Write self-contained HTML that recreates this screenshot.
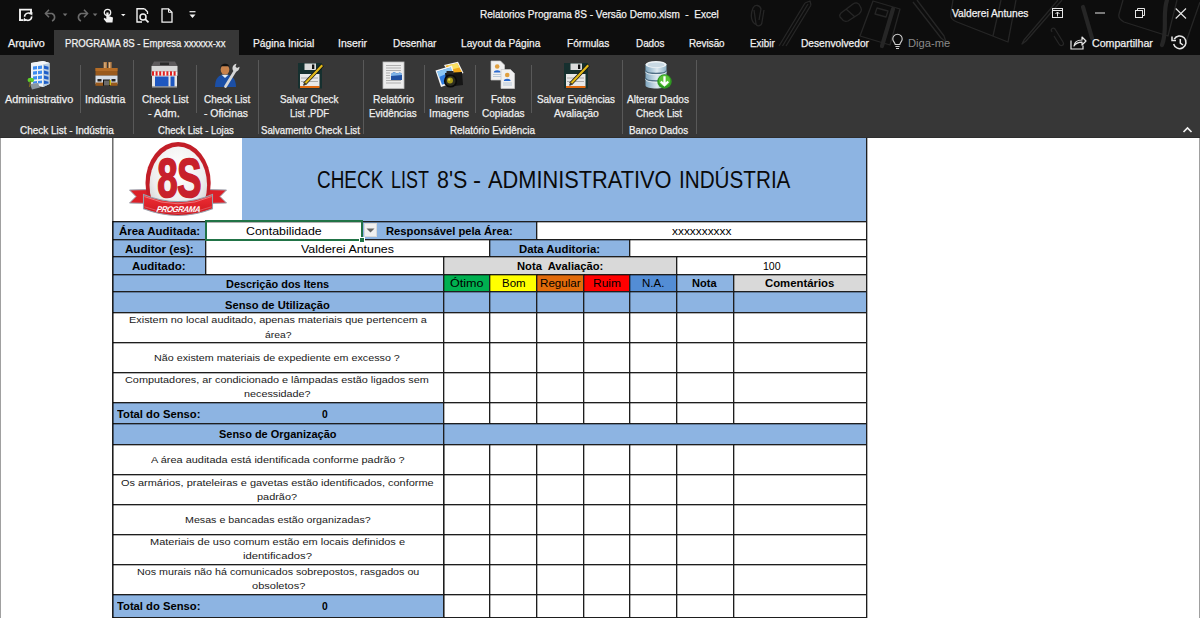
<!DOCTYPE html>
<html><head><meta charset="utf-8"><title>Excel</title>
<style>
html,body{margin:0;padding:0;width:1200px;height:618px;overflow:hidden;background:#fff;position:relative;font-family:"Liberation Sans",sans-serif}
.a{position:absolute}
.tx{position:absolute;white-space:pre;transform-origin:0 0;font-family:"Liberation Sans",sans-serif}
.hl{position:absolute;height:1px;background:#1e1e1e;box-shadow:0 1px 0 rgba(0,0,0,0.3)}
.vl{position:absolute;width:1px;background:#1e1e1e;box-shadow:1px 0 0 rgba(0,0,0,0.3)}
.sep{position:absolute;width:1px;background:#595959}
svg{position:absolute;overflow:visible}

</style></head><body>
<div class="a" style="left:0;top:0;width:1200px;height:55px;background:#0d0d0d"></div>
<div class="a" style="left:54px;top:30px;width:185px;height:25px;background:#373737"></div>
<div class="a" style="left:0;top:55px;width:1200px;height:83px;background:#373737"></div>
<div class="a" style="left:0;top:137px;width:1200px;height:1px;background:#2e2e2e"></div>
<div class="a" style="left:242px;top:138px;width:624px;height:83px;background:#8db4e2"></div>
<div class="a" style="left:112px;top:221px;width:93px;height:53px;background:#8db4e2"></div>
<div class="a" style="left:362px;top:221px;width:174px;height:18px;background:#8db4e2"></div>
<div class="a" style="left:489px;top:239px;width:140px;height:17px;background:#8db4e2"></div>
<div class="a" style="left:443px;top:256px;width:233px;height:18px;background:#d9d9d9"></div>
<div class="a" style="left:112px;top:274px;width:331px;height:17px;background:#8db4e2"></div>
<div class="a" style="left:443px;top:274px;width:46px;height:17px;background:#00b050"></div>
<div class="a" style="left:489px;top:274px;width:47px;height:17px;background:#ffff00"></div>
<div class="a" style="left:536px;top:274px;width:47px;height:17px;background:#e26b0a"></div>
<div class="a" style="left:583px;top:274px;width:46px;height:17px;background:#ff0000"></div>
<div class="a" style="left:629px;top:274px;width:47px;height:17px;background:#538dd5"></div>
<div class="a" style="left:676px;top:274px;width:57px;height:17px;background:#8db4e2"></div>
<div class="a" style="left:733px;top:274px;width:133px;height:17px;background:#d9d9d9"></div>
<div class="a" style="left:112px;top:291px;width:754px;height:21px;background:#8db4e2"></div>
<div class="a" style="left:112px;top:402px;width:331px;height:21px;background:#8db4e2"></div>
<div class="a" style="left:112px;top:423px;width:754px;height:21px;background:#8db4e2"></div>
<div class="a" style="left:112px;top:594px;width:331px;height:23px;background:#8db4e2"></div>
<div class="hl" style="left:112px;top:221px;width:755px"></div>
<div class="hl" style="left:112px;top:239px;width:755px"></div>
<div class="hl" style="left:112px;top:256px;width:755px"></div>
<div class="hl" style="left:112px;top:274px;width:755px"></div>
<div class="hl" style="left:112px;top:291px;width:755px"></div>
<div class="hl" style="left:112px;top:312px;width:755px"></div>
<div class="hl" style="left:112px;top:342px;width:755px"></div>
<div class="hl" style="left:112px;top:372px;width:755px"></div>
<div class="hl" style="left:112px;top:402px;width:755px"></div>
<div class="hl" style="left:112px;top:423px;width:755px"></div>
<div class="hl" style="left:112px;top:444px;width:755px"></div>
<div class="hl" style="left:112px;top:474px;width:755px"></div>
<div class="hl" style="left:112px;top:504px;width:755px"></div>
<div class="hl" style="left:112px;top:534px;width:755px"></div>
<div class="hl" style="left:112px;top:564px;width:755px"></div>
<div class="hl" style="left:112px;top:594px;width:755px"></div>
<div class="hl" style="left:112px;top:617px;width:755px"></div>
<div class="vl" style="left:112px;top:138px;height:480px;background:#6e6e6e"></div>
<div class="vl" style="left:112px;top:221px;height:397px"></div>
<div class="vl" style="left:866px;top:138px;height:480px"></div>
<div class="vl" style="left:205px;top:221px;height:54px"></div>
<div class="vl" style="left:536px;top:221px;height:19px"></div>
<div class="vl" style="left:489px;top:239px;height:18px"></div>
<div class="vl" style="left:629px;top:239px;height:18px"></div>
<div class="vl" style="left:443px;top:256px;height:362px"></div>
<div class="vl" style="left:676px;top:256px;height:19px"></div>
<div class="vl" style="left:489px;top:274px;height:150px"></div>
<div class="vl" style="left:536px;top:274px;height:150px"></div>
<div class="vl" style="left:583px;top:274px;height:150px"></div>
<div class="vl" style="left:629px;top:274px;height:150px"></div>
<div class="vl" style="left:676px;top:274px;height:150px"></div>
<div class="vl" style="left:733px;top:274px;height:150px"></div>
<div class="vl" style="left:443px;top:444px;height:174px"></div>
<div class="vl" style="left:489px;top:444px;height:174px"></div>
<div class="vl" style="left:536px;top:444px;height:174px"></div>
<div class="vl" style="left:583px;top:444px;height:174px"></div>
<div class="vl" style="left:629px;top:444px;height:174px"></div>
<div class="vl" style="left:676px;top:444px;height:174px"></div>
<div class="vl" style="left:733px;top:444px;height:174px"></div>
<div class="a" style="left:205px;top:220px;width:154px;height:17px;border:2px solid #217346"></div>
<div class="a" style="left:359px;top:237px;width:6px;height:6px;background:#217346;border:1px solid #fff;box-sizing:border-box"></div>
<div class="a" style="left:364px;top:223px;width:13px;height:14px;background:#f0f0f0;border:1px solid #dadada;box-sizing:border-box"></div>
<svg style="left:366px;top:228px" width="9" height="5"><path d="M0.5 0.5 L8.5 0.5 L4.5 4.5 Z" fill="#666"/></svg>
<div class="a" style="left:0;top:138px;width:1px;height:480px;background:#a0a0a0"></div>
<div class="a" style="left:1199px;top:138px;width:1px;height:480px;background:#a0a0a0"></div>
<svg style="left:740px;top:0px" width="460" height="55" viewBox="740 0 460 55">
 <g fill="none" stroke="#262626" stroke-width="1.3" stroke-linejoin="round">
  <path d="M757 25 C751 23 750 15 753 8 C755 4 760 5 761 9 L759 20 M754 10 L756 24 C757 27 762 26 762 22 L764 10"/>
  <path d="M805 3 L779 46 M811 5 L786 46 M808 4 L782.5 46 M805 3 L810 1 L811 5"/>
  <path d="M841 13 L853 4 C856 2 859 3 860 6 L861 8 C862 10 861 12 859 14 L848 21 C845 22 843 21 842 19 L840 17 C839 15 840 14 841 13 Z M846 9 L855 17"/>
  <path d="M873 1 L900 9 L890 45 L860 36 Z"/>
  <path d="M877 8 L888 11 L886 17 L875 14 Z"/>
  <path d="M917 0 L944 36 L946 42 L941 38 L913 2"/>
  <path d="M953 0 L951 12 C950 18 952 20 957 22 L1008 42 L1016 0"/>
  <path d="M1001 0 L993 36"/>
  <path d="M1058 0 L1024 40 L1022 44 L1026 41 L1062 0"/>
  <path d="M1052 32 C1050 29 1053 27 1055 29 L1063 42 C1065 45 1061 47 1059 44 L1054 36"/>
  <path d="M1123 0 L1119 14 C1118 18 1120 20 1124 22 L1168 36 L1177 0"/>
  <path d="M1200 2 L1185 45"/>
 </g>
 <g fill="none" stroke="#262626" stroke-width="4.2" stroke-linecap="round">
  <path d="M1083 7 L1092 38"/>
  <path d="M893 9 L882 46"/>
  <path d="M1167 0 C1162 15 1168 30 1162 45"/>
 </g>
</svg>
<!-- QAT icons -->
<svg style="left:14px;top:4px" width="24" height="22" viewBox="14 4 24 22">
 <path d="M20 21 V9.6 H31 V13" fill="none" stroke="#f4f4f4" stroke-width="1.9"/>
 <path d="M19.2 20.1 H23.5" stroke="#f4f4f4" stroke-width="1.8"/>
 <path d="M24.6 16.8 A3.6 3.6 0 0 1 30.8 14.2" fill="none" stroke="#f4f4f4" stroke-width="1.6"/>
 <path d="M31.6 16.4 A3.6 3.6 0 0 1 25.4 19.2" fill="none" stroke="#f4f4f4" stroke-width="1.6"/>
 <path d="M29.4 12.6 L32.6 12.2 L32.2 15.8 Z" fill="#f4f4f4"/>
 <path d="M26.8 20.8 L23.6 21.2 L24 17.6 Z" fill="#f4f4f4"/>
</svg>
<svg style="left:44px;top:8px" width="24" height="14" viewBox="0 0 24 14">
 <path d="M1.5 5.5 H8 A4 4 0 0 1 8 13" fill="none" stroke="#6b6b6b" stroke-width="1.6"/>
 <path d="M5 1.8 L1.5 5.5 L5 9.2" fill="none" stroke="#6b6b6b" stroke-width="1.6"/>
 <path d="M18.8 5.6 H23.4 L21.1 8.3 Z" fill="#707070"/>
</svg>
<svg style="left:75px;top:8px" width="24" height="14" viewBox="0 0 24 14">
 <path d="M12.5 5.5 H6 A4 4 0 0 0 6 13" fill="none" stroke="#6b6b6b" stroke-width="1.6"/>
 <path d="M9 1.8 L12.5 5.5 L9 9.2" fill="none" stroke="#6b6b6b" stroke-width="1.6"/>
 <path d="M17.8 5.6 H22.4 L20.1 8.3 Z" fill="#707070"/>
</svg>
<svg style="left:102px;top:8px" width="25" height="15" viewBox="0 0 25 15">
 <circle cx="5.5" cy="4.5" r="3.2" fill="none" stroke="#f2f2f2" stroke-width="1.3"/>
 <path d="M4.3 4.5 V11 L2.5 9.8 L1.6 11 L4.5 14.5 H10.5 L11 9.5 L6.6 8 V4.5 Z" fill="#f2f2f2"/>
 <path d="M19 6 H23.5 L21.25 8.3 Z" fill="#f2f2f2"/>
</svg>
<svg style="left:136px;top:8px" width="14" height="15" viewBox="0 0 14 15">
 <path d="M8.5 0.8 H1 V14 H6" fill="none" stroke="#f2f2f2" stroke-width="1.4"/>
 <path d="M8.5 0.8 L11.5 3.8 V6" fill="none" stroke="#f2f2f2" stroke-width="1.3"/>
 <circle cx="7" cy="9" r="3" fill="none" stroke="#f2f2f2" stroke-width="1.5"/>
 <path d="M9.2 11.2 L12.5 14.3" stroke="#f2f2f2" stroke-width="1.8"/>
</svg>
<svg style="left:161px;top:8px" width="12" height="15" viewBox="0 0 12 15">
 <path d="M1 0.8 H7.5 L11 4.3 V14.2 H1 Z" fill="none" stroke="#f2f2f2" stroke-width="1.3"/>
 <path d="M7.5 0.8 V4.3 H11" fill="none" stroke="#f2f2f2" stroke-width="1"/>
</svg>
<svg style="left:189px;top:11px" width="7" height="8" viewBox="0 0 7 8">
 <path d="M0.5 0.7 H6.5" stroke="#f2f2f2" stroke-width="1.2"/>
 <path d="M0.5 3.5 H6.5 L3.5 7 Z" fill="#f2f2f2"/>
</svg>
<!-- window controls -->
<svg style="left:1052px;top:8px" width="11" height="10" viewBox="0 0 11 10">
 <rect x="0.5" y="0.5" width="10" height="9" fill="none" stroke="#e6e6e6" stroke-width="1"/>
 <path d="M0.5 2.5 H10.5" stroke="#e6e6e6" stroke-width="1"/>
 <path d="M3.5 6 L5.5 4 L7.5 6 M5.5 4 V8.5" fill="none" stroke="#e6e6e6" stroke-width="1"/>
</svg>
<svg style="left:1095px;top:12px" width="11" height="2"><path d="M0 1 H10" stroke="#e6e6e6" stroke-width="1"/></svg>
<svg style="left:1135px;top:8px" width="10" height="10" viewBox="0 0 10 10">
 <rect x="0.5" y="2.5" width="7" height="7" fill="none" stroke="#e6e6e6" stroke-width="1"/>
 <path d="M2.5 2.5 V0.5 H9.5 V7.5 H7.5" fill="none" stroke="#e6e6e6" stroke-width="1"/>
</svg>
<svg style="left:1175px;top:8px" width="12" height="11" viewBox="0 0 12 11">
 <path d="M0.7 0.5 L11 10.5 M11 0.5 L0.7 10.5" stroke="#e6e6e6" stroke-width="1.1"/>
</svg>
<!-- tell me bulb -->
<svg style="left:892px;top:34px" width="11" height="16" viewBox="0 0 11 16">
 <path d="M3.2 10.5 C3 8.5 0.8 7.5 0.8 5 A4.7 4.7 0 0 1 10.2 5 C10.2 7.5 8 8.5 7.8 10.5 Z" fill="none" stroke="#d0d0d0" stroke-width="1.1"/>
 <path d="M3.4 12.5 H7.6 M4 14.5 H7" stroke="#d0d0d0" stroke-width="1.1"/>
</svg>
<!-- share -->
<svg style="left:1070px;top:35px" width="17" height="15" viewBox="0 0 17 15">
 <path d="M1 5.5 V14 H13 V10.5" fill="none" stroke="#e6e6e6" stroke-width="1.2"/>
 <path d="M4 11 C4.5 6.5 8 5 12 5 V2 L16 6 L12 10 V7.2 C8.5 7.2 6 8 4 11 Z" fill="none" stroke="#e6e6e6" stroke-width="1.2" stroke-linejoin="round"/>
</svg>
<!-- history -->
<svg style="left:1171px;top:35px" width="17" height="15" viewBox="0 0 17 15">
 <path d="M3.2 4.2 A6.3 6.3 0 1 1 2.6 9" fill="none" stroke="#e6e6e6" stroke-width="1.5"/>
 <path d="M1 1.5 V5.5 H5" fill="none" stroke="#e6e6e6" stroke-width="1.5"/>
 <path d="M9.3 4 V8 L12 10" fill="none" stroke="#e6e6e6" stroke-width="1.5"/>
</svg>
<!-- ribbon collapse caret -->
<svg style="left:1182px;top:125px" width="11" height="9" viewBox="0 0 11 9">
 <path d="M1.5 7 L5.5 3 L9.5 7" fill="none" stroke="#f2f2f2" stroke-width="1.7"/>
</svg>
<!-- ribbon separators -->
<div class="sep" style="left:80px;top:65px;height:48px"></div>
<div class="sep" style="left:133px;top:60px;height:74px"></div>
<div class="sep" style="left:196px;top:65px;height:48px"></div>
<div class="sep" style="left:258px;top:60px;height:74px"></div>
<div class="sep" style="left:363px;top:60px;height:74px"></div>
<div class="sep" style="left:424px;top:65px;height:48px"></div>
<div class="sep" style="left:475px;top:65px;height:48px"></div>
<div class="sep" style="left:531px;top:65px;height:48px"></div>
<div class="sep" style="left:622px;top:60px;height:74px"></div>
<div class="sep" style="left:696px;top:60px;height:74px"></div>
<!-- Administrativo building -->
<svg style="left:26px;top:60px" width="26" height="30" viewBox="0 0 26 30">
 <path d="M5 3 L17 1 L23.5 3 V24 L17 27 L5 25 Z" fill="#eef2f6"/>
 <path d="M17 1 L23.5 3 V24 L17 27 Z" fill="#b8cde0"/>
 <path d="M5 3 L17 1 L23.5 3 L17 4.5 Z" fill="#f4f6f8"/>
 <g fill="#3d8cf0">
  <path d="M7 6.5 L11 6 V9.3 L7 9.8 Z"/><path d="M12 5.9 L16 5.4 V8.7 L12 9.2 Z"/>
  <path d="M7 11.5 L11 11 V14.3 L7 14.8 Z"/><path d="M12 10.9 L16 10.4 V13.7 L12 14.2 Z"/>
  <path d="M7 16.5 L11 16 V19.3 L7 19.8 Z"/><path d="M12 15.9 L16 15.4 V18.7 L12 19.2 Z"/>
  <path d="M7 21.5 L11 21 V23.3 L7 23.8 Z"/><path d="M12 20.9 L16 20.4 V23.2 L12 23.5 Z"/>
 </g>
 <g fill="#1f5fc8">
  <path d="M18 5.6 L22.5 6.8 V9.8 L18 8.8 Z"/><path d="M18 10.6 L22.5 11.8 V14.8 L18 13.8 Z"/><path d="M18 15.6 L22.5 16.8 V19.8 L18 18.8 Z"/><path d="M18 20.6 L22.5 21.8 V23.5 L18 24 Z"/>
 </g>
 <path d="M4 24 L12 23 L14 27.5 L6 29.5 Z" fill="#8a96a0"/>
 <ellipse cx="4.8" cy="20" rx="3.2" ry="2.3" fill="#5ccf2a"/>
 <path d="M4.5 21 L3.5 27" stroke="#7a6a20" stroke-width="1.3"/>
</svg>
<!-- Industria factory -->
<svg style="left:95px;top:61px" width="23" height="26" viewBox="0 0 23 26">
 <rect x="8.5" y="1" width="3.5" height="7" fill="#b07a45"/><rect x="13.2" y="1" width="3.5" height="7" fill="#b07a45"/>
 <rect x="9.3" y="1.5" width="1.2" height="6" fill="#e0b888"/><rect x="14" y="1.5" width="1.2" height="6" fill="#e0b888"/>
 <rect x="0.5" y="7" width="22" height="7.6" fill="#9a5a1c"/>
 <rect x="0.5" y="7" width="22" height="3" fill="#b46c26"/>
 <rect x="0.5" y="14.6" width="22" height="8.5" fill="#d6dde6"/>
 <rect x="0.5" y="21.5" width="22" height="3.3" fill="#9a5a1c"/>
 <rect x="2.5" y="18" width="4" height="2.5" fill="#222"/><rect x="16.5" y="18" width="4" height="2.5" fill="#222"/>
 <rect x="8" y="18.5" width="7" height="6.3" fill="#111"/><rect x="9" y="19.5" width="5" height="5" fill="#6a6a6a"/>
 <rect x="14.5" y="19" width="1.5" height="5" fill="#c8c020"/>
</svg>
<!-- store -->
<svg style="left:151px;top:60px" width="28" height="29" viewBox="0 0 28 29">
 <path d="M3 1.5 H24 L26.5 6 H0.5 Z" fill="#5d5a5c"/>
 <rect x="9" y="2.5" width="9" height="2.5" fill="#2a2a2a"/>
 <rect x="0.5" y="6" width="26" height="5.3" fill="#d8d8d8"/>
 <rect x="0.5" y="11.3" width="26" height="4.5" fill="#f4f4f4"/>
 <g fill="#e02020"><rect x="1" y="11.3" width="2" height="4.5"/><rect x="4.6" y="11.3" width="2" height="4.5"/><rect x="8.2" y="11.3" width="2" height="4.5"/><rect x="11.8" y="11.3" width="2" height="4.5"/><rect x="15.4" y="11.3" width="2" height="4.5"/><rect x="19" y="11.3" width="2" height="4.5"/><rect x="22.6" y="11.3" width="2" height="4.5"/></g>
 <rect x="1" y="15.8" width="25" height="11" fill="#e6e6e6"/>
 <rect x="4" y="16.5" width="13.5" height="10" fill="#1e57c0"/>
 <rect x="19.5" y="16.5" width="4" height="10" fill="#1e57c0"/>
 <rect x="1" y="26.5" width="25" height="1.2" fill="#8a8a8a"/>
</svg>
<!-- worker -->
<svg style="left:214px;top:61px" width="26" height="27" viewBox="0 0 26 27">
 <path d="M1 26 C1 17 5 13.5 11 13.5 C17 13.5 22 17 22 26 Z" fill="#1b4fa6"/>
 <path d="M7.5 13.8 L11 17 L14.5 13.8 Z" fill="#e4eef6"/>
 <ellipse cx="11" cy="8.8" rx="4.3" ry="5" fill="#c7824c"/>
 <path d="M6.6 7.2 C6 1.5 16 1.2 15.4 7.2 L14.8 5.2 H7.2 Z" fill="#121212"/>
 <path d="M11.5 25.5 L21 10" stroke="#d6d6d6" stroke-width="2.8" stroke-linecap="round"/>
 <path d="M19 9.5 C17.5 6.5 19.5 3 22.5 2.8 L21.5 5.5 L23 7 L25.5 5.8 C25.6 9 23 11 20.5 10.8 Z" fill="#d6d6d6"/>
</svg>
<!-- floppy -->
<svg id="floppy" style="left:297px;top:62px" width="28" height="27" viewBox="0 0 28 27">
 <rect x="1" y="1" width="24" height="25.5" fill="#16302f"/>
 <rect x="7.5" y="1.5" width="11.5" height="6.5" fill="#dcdcdc"/>
 <rect x="15" y="2.5" width="2.3" height="4.5" fill="#111"/>
 <rect x="3" y="12" width="19.5" height="12.5" fill="#e8e8e8"/>
 <path d="M4 16 H21 M4 19.5 H21" stroke="#9a9a9a" stroke-width="0.8"/>
 <rect x="3" y="24" width="19.5" height="2" fill="#e06a10"/>
 <path d="M7.5 22 L25.5 3" stroke="#111" stroke-width="3.6"/>
 <path d="M7.8 21.7 L25.3 3.2" stroke="#e0b818" stroke-width="2.2"/>
 <path d="M6.5 23.5 L8.5 21" stroke="#333" stroke-width="1.5"/>
</svg>
<svg style="left:563px;top:62px" width="28" height="27" viewBox="0 0 28 27">
 <rect x="1" y="1" width="24" height="25.5" fill="#16302f"/>
 <rect x="7.5" y="1.5" width="11.5" height="6.5" fill="#dcdcdc"/>
 <rect x="15" y="2.5" width="2.3" height="4.5" fill="#111"/>
 <rect x="3" y="12" width="19.5" height="12.5" fill="#e8e8e8"/>
 <path d="M4 16 H21 M4 19.5 H21" stroke="#9a9a9a" stroke-width="0.8"/>
 <rect x="3" y="24" width="19.5" height="2" fill="#e06a10"/>
 <path d="M7.5 22 L25.5 3" stroke="#111" stroke-width="3.6"/>
 <path d="M7.8 21.7 L25.3 3.2" stroke="#e0b818" stroke-width="2.2"/>
 <path d="M6.5 23.5 L8.5 21" stroke="#333" stroke-width="1.5"/>
</svg>
<!-- document -->
<svg style="left:382px;top:61px" width="23" height="28" viewBox="0 0 23 28">
 <rect x="1" y="1" width="21" height="26.5" fill="#ececec" stroke="#bdbdbd" stroke-width="0.8"/>
 <path d="M4 4.5 H19 M4 7 H19 M4 9.5 H19 M4 12 H8 M4 14.5 H8 M4 17 H8 M4 19.5 H19 M4 22 H19" stroke="#a8a8a8" stroke-width="0.9"/>
 <path d="M9 19 V13 L12 11 L15 12.5 L18 11.5 L20 13 V19 Z" fill="#2050a0"/>
 <path d="M9 13 L12 11 L15 12.5 L18 11.5 L20 13 V14 L9 15 Z" fill="#7fb4e8"/>
</svg>
<!-- camera -->
<svg style="left:435px;top:61px" width="30" height="28" viewBox="0 0 30 28">
 <path d="M9 4 L23 0.8 L28.5 12 L16 16 Z" fill="#f4f4f4"/>
 <path d="M10.5 4.8 L22.3 2.2 L27 11.3 L16.5 14.5 Z" fill="#f2a818"/>
 <path d="M13 4.2 L22.3 2.2 L24.5 6.5 L15 9 Z" fill="#f8e060"/>
 <path d="M0.5 9.5 L17 4.5 L21 21 L6 26 Z" fill="#f4f4f4"/>
 <path d="M2.3 10.6 L15.8 6.5 L19.3 19.8 L7 23.8 Z" fill="#2f7de0"/>
 <path d="M2.3 10.6 L15.8 6.5 L16.8 10.5 L4 16 Z" fill="#8cc8f4"/>
 <path d="M10 12 L27 11 L28 24 L12 26 Z" fill="#161616"/>
 <rect x="11.5" y="10" width="7" height="3.5" fill="#262626"/>
 <circle cx="15.5" cy="20" r="6.6" fill="#0a0a0a"/>
 <circle cx="15.5" cy="20" r="5" fill="#2e2e20"/>
 <circle cx="15" cy="19.5" r="3" fill="#a89a18"/>
 <circle cx="14.2" cy="18.7" r="1.1" fill="#e0d860"/>
</svg>
<!-- fotos copiadas -->
<svg style="left:489px;top:60px" width="28" height="30" viewBox="0 0 28 30">
 <path d="M2 1 H11.5 L15.5 5 V20 H2 Z" fill="#f0f0f0" stroke="#c8c8c8" stroke-width="0.7"/>
 <circle cx="8.2" cy="6.5" r="2.3" fill="#e0a040"/>
 <path d="M4.8 12.5 C4.8 9.5 11.6 9.5 11.6 12.5 Z" fill="#2a6ad0"/>
 <path d="M4 14.5 H13 M4 16.5 H13" stroke="#b8c8d8" stroke-width="1"/>
 <path d="M12 9.5 H21.5 L25.5 13.5 V28.5 H12 Z" fill="#f0f0f0" stroke="#c8c8c8" stroke-width="0.7"/>
 <circle cx="18.2" cy="15" r="2.3" fill="#e0a040"/>
 <path d="M14.8 21 C14.8 18 21.6 18 21.6 21 Z" fill="#2a6ad0"/>
 <path d="M14 23 H23 M14 25 H23" stroke="#b8c8d8" stroke-width="1"/>
</svg>
<!-- database -->
<svg style="left:644px;top:60px" width="30" height="30" viewBox="0 0 30 30">
 <defs><linearGradient id="db" x1="0" y1="0" x2="1" y2="0"><stop offset="0" stop-color="#7fa6bf"/><stop offset="0.55" stop-color="#dce8ef"/><stop offset="1" stop-color="#8fb3c8"/></linearGradient></defs>
 <path d="M1.5 4 V25.5 C1.5 29.5 22.5 29.5 22.5 25.5 V4 Z" fill="url(#db)"/>
 <ellipse cx="12" cy="4.5" rx="10.5" ry="3.6" fill="#eef3f6"/>
 <ellipse cx="12" cy="4.8" rx="8.5" ry="2.4" fill="#c9d9e3"/>
 <path d="M1.5 10.5 C1.5 14.5 22.5 14.5 22.5 10.5" fill="none" stroke="#4e6e84" stroke-width="1.6"/>
 <path d="M1.5 11.8 C1.5 15.6 22.5 15.6 22.5 11.8" fill="none" stroke="#f2f6f8" stroke-width="0.8"/>
 <path d="M1.5 18 C1.5 22 22.5 22 22.5 18" fill="none" stroke="#4e6e84" stroke-width="1.6"/>
 <path d="M1.5 19.3 C1.5 23.1 22.5 23.1 22.5 19.3" fill="none" stroke="#f2f6f8" stroke-width="0.8"/>
 <circle cx="20.5" cy="21.5" r="7.2" fill="#2f9a22"/>
 <circle cx="20.5" cy="20.5" r="5.6" fill="#58c236"/>
 <path d="M20.5 16.2 V25 M16.8 21.5 L20.5 25.2 L24.2 21.5" fill="none" stroke="#fff" stroke-width="2.3"/>
</svg>
<svg style="left:125px;top:138px" width="110" height="83" viewBox="125 138 110 83">
 <defs>
  <radialGradient id="lg" cx="0.5" cy="0.3" r="0.75"><stop offset="0" stop-color="#ffffff"/><stop offset="0.6" stop-color="#eeeeee"/><stop offset="1" stop-color="#c4c4c4"/></radialGradient>
  <linearGradient id="rb" x1="0" y1="0" x2="0" y2="1"><stop offset="0" stop-color="#f03036"/><stop offset="1" stop-color="#cc161e"/></linearGradient>
  <clipPath id="lc"><rect x="120" y="138" width="120" height="70"/></clipPath>
 </defs>
 <path d="M129.5 190 L151 189.5 L151 203.5 L129.5 203 L136 196.5 Z" fill="#dc2028" stroke="#9aa4b0" stroke-width="1"/>
 <path d="M226.5 190 L205 189.5 L205 203.5 L226.5 203 L220 196.5 Z" fill="#dc2028" stroke="#9aa4b0" stroke-width="1"/>
 <g clip-path="url(#lc)">
 <ellipse cx="178.1" cy="183" rx="32.6" ry="41" fill="#c21e28"/>
 <ellipse cx="178.3" cy="185" rx="28.8" ry="38.5" fill="url(#lg)"/>
 </g>
 <text x="0" y="0" transform="translate(157.3 197.4) scale(0.92 1.37)" font-family="Liberation Sans" font-weight="700" font-size="40" fill="#c8212b" stroke="#c8212b" stroke-width="1.2" letter-spacing="-0.8">8S</text>
 <path d="M143.5 194.4 Q178 208.8 212.5 194.4 L212.5 208.8 Q178 222.2 143.5 208.8 Z" fill="url(#rb)" stroke="#98a0ac" stroke-width="1.1"/>
 <path d="M144.5 196.6 Q178 211 211.5 196.6" fill="none" stroke="#ffffff" stroke-opacity="0.45" stroke-width="0.8"/>
 <path d="M144.5 206.8 Q178 220 211.5 206.8" fill="none" stroke="#ffffff" stroke-opacity="0.35" stroke-width="0.7"/>
 <text x="178" y="212.3" text-anchor="middle" font-family="Liberation Sans" font-style="italic" font-weight="700" font-size="8.2" fill="#ffffff" letter-spacing="-0.45" transform="translate(178 212.3) skewX(-10) scale(0.96 1) translate(-178 -212.3)">PROGRAMA</text>
</svg>

<div class="tx" style="left:479.80px;top:8.60px;font-size:11.2px;line-height:11.2px;font-weight:400;color:#f2f2f2;transform:scaleX(0.8951);-webkit-text-stroke:0.25px #f2f2f2;">Relatorios Programa 8S - Versão Demo.xlsm  -  Excel</div>
<div class="tx" style="left:951.90px;top:8.40px;font-size:11.2px;line-height:11.2px;font-weight:400;color:#f2f2f2;transform:scaleX(0.9129);-webkit-text-stroke:0.25px #f2f2f2;">Valderei Antunes</div>
<div class="tx" style="left:7.50px;top:38.20px;font-size:11.2px;line-height:11.2px;font-weight:400;color:#f2f2f2;transform:scaleX(0.9679);-webkit-text-stroke:0.25px #f2f2f2;">Arquivo</div>
<div class="tx" style="left:65.30px;top:38.20px;font-size:11.2px;line-height:11.2px;font-weight:400;color:#f2f2f2;transform:scaleX(0.8545);-webkit-text-stroke:0.25px #f2f2f2;">PROGRAMA 8S - Empresa xxxxxx-xx</div>
<div class="tx" style="left:252.50px;top:38.20px;font-size:11.2px;line-height:11.2px;font-weight:400;color:#f2f2f2;transform:scaleX(0.9204);-webkit-text-stroke:0.25px #f2f2f2;">Página Inicial</div>
<div class="tx" style="left:338.27px;top:38.20px;font-size:11.2px;line-height:11.2px;font-weight:400;color:#f2f2f2;transform:scaleX(0.9322);-webkit-text-stroke:0.25px #f2f2f2;">Inserir</div>
<div class="tx" style="left:392.50px;top:38.20px;font-size:11.2px;line-height:11.2px;font-weight:400;color:#f2f2f2;transform:scaleX(0.8917);-webkit-text-stroke:0.25px #f2f2f2;">Desenhar</div>
<div class="tx" style="left:461.30px;top:38.20px;font-size:11.2px;line-height:11.2px;font-weight:400;color:#f2f2f2;transform:scaleX(0.9105);-webkit-text-stroke:0.25px #f2f2f2;">Layout da Página</div>
<div class="tx" style="left:566.70px;top:38.20px;font-size:11.2px;line-height:11.2px;font-weight:400;color:#f2f2f2;transform:scaleX(0.9058);-webkit-text-stroke:0.25px #f2f2f2;">Fórmulas</div>
<div class="tx" style="left:635.60px;top:38.20px;font-size:11.2px;line-height:11.2px;font-weight:400;color:#f2f2f2;transform:scaleX(0.8826);-webkit-text-stroke:0.25px #f2f2f2;">Dados</div>
<div class="tx" style="left:689.40px;top:38.20px;font-size:11.2px;line-height:11.2px;font-weight:400;color:#f2f2f2;transform:scaleX(0.8807);-webkit-text-stroke:0.25px #f2f2f2;">Revisão</div>
<div class="tx" style="left:750.30px;top:38.20px;font-size:11.2px;line-height:11.2px;font-weight:400;color:#f2f2f2;transform:scaleX(0.8815);-webkit-text-stroke:0.25px #f2f2f2;">Exibir</div>
<div class="tx" style="left:800.50px;top:38.20px;font-size:11.2px;line-height:11.2px;font-weight:400;color:#f2f2f2;transform:scaleX(0.9106);-webkit-text-stroke:0.25px #f2f2f2;">Desenvolvedor</div>
<div class="tx" style="left:907.50px;top:38.20px;font-size:11.2px;line-height:11.2px;font-weight:400;color:#8a8a8a;transform:scaleX(0.9987);">Diga-me</div>
<div class="tx" style="left:1092.30px;top:37.60px;font-size:11.2px;line-height:11.2px;font-weight:400;color:#f2f2f2;transform:scaleX(0.9500);-webkit-text-stroke:0.25px #f2f2f2;">Compartilhar</div>
<div class="tx" style="left:5.00px;top:93.60px;font-size:11.2px;line-height:11.2px;font-weight:400;color:#f0f0f0;transform:scaleX(0.9710);-webkit-text-stroke:0.25px #f0f0f0;">Administrativo</div>
<div class="tx" style="left:85.06px;top:93.60px;font-size:11.2px;line-height:11.2px;font-weight:400;color:#f0f0f0;transform:scaleX(0.9371);-webkit-text-stroke:0.25px #f0f0f0;">Indústria</div>
<div class="tx" style="left:141.70px;top:93.60px;font-size:11.2px;line-height:11.2px;font-weight:400;color:#f0f0f0;transform:scaleX(0.8923);-webkit-text-stroke:0.25px #f0f0f0;">Check List</div>
<div class="tx" style="left:147.90px;top:107.70px;font-size:11.2px;line-height:11.2px;font-weight:400;color:#f0f0f0;transform:scaleX(0.9836);-webkit-text-stroke:0.25px #f0f0f0;">- Adm.</div>
<div class="tx" style="left:204.30px;top:93.60px;font-size:11.2px;line-height:11.2px;font-weight:400;color:#f0f0f0;transform:scaleX(0.8848);-webkit-text-stroke:0.25px #f0f0f0;">Check List</div>
<div class="tx" style="left:204.30px;top:107.70px;font-size:11.2px;line-height:11.2px;font-weight:400;color:#f0f0f0;transform:scaleX(0.9296);-webkit-text-stroke:0.25px #f0f0f0;">- Oficinas</div>
<div class="tx" style="left:280.40px;top:93.60px;font-size:11.2px;line-height:11.2px;font-weight:400;color:#f0f0f0;transform:scaleX(0.8785);-webkit-text-stroke:0.25px #f0f0f0;">Salvar Check</div>
<div class="tx" style="left:290.00px;top:107.70px;font-size:11.2px;line-height:11.2px;font-weight:400;color:#f0f0f0;transform:scaleX(0.8513);-webkit-text-stroke:0.25px #f0f0f0;">List .PDF</div>
<div class="tx" style="left:372.70px;top:93.60px;font-size:11.2px;line-height:11.2px;font-weight:400;color:#f0f0f0;transform:scaleX(0.9203);-webkit-text-stroke:0.25px #f0f0f0;">Relatório</div>
<div class="tx" style="left:369.30px;top:107.70px;font-size:11.2px;line-height:11.2px;font-weight:400;color:#f0f0f0;transform:scaleX(0.8806);-webkit-text-stroke:0.25px #f0f0f0;">Evidências</div>
<div class="tx" style="left:434.78px;top:93.60px;font-size:11.2px;line-height:11.2px;font-weight:400;color:#f0f0f0;transform:scaleX(0.9158);-webkit-text-stroke:0.25px #f0f0f0;">Inserir</div>
<div class="tx" style="left:428.77px;top:107.70px;font-size:11.2px;line-height:11.2px;font-weight:400;color:#f0f0f0;transform:scaleX(0.9335);-webkit-text-stroke:0.25px #f0f0f0;">Imagens</div>
<div class="tx" style="left:490.50px;top:93.60px;font-size:11.2px;line-height:11.2px;font-weight:400;color:#f0f0f0;transform:scaleX(0.8878);-webkit-text-stroke:0.25px #f0f0f0;">Fotos</div>
<div class="tx" style="left:481.80px;top:107.70px;font-size:11.2px;line-height:11.2px;font-weight:400;color:#f0f0f0;transform:scaleX(0.8999);-webkit-text-stroke:0.25px #f0f0f0;">Copiadas</div>
<div class="tx" style="left:536.70px;top:93.60px;font-size:11.2px;line-height:11.2px;font-weight:400;color:#f0f0f0;transform:scaleX(0.8766);-webkit-text-stroke:0.25px #f0f0f0;">Salvar Evidências</div>
<div class="tx" style="left:553.50px;top:107.70px;font-size:11.2px;line-height:11.2px;font-weight:400;color:#f0f0f0;transform:scaleX(0.9296);-webkit-text-stroke:0.25px #f0f0f0;">Avaliação</div>
<div class="tx" style="left:627.30px;top:93.60px;font-size:11.2px;line-height:11.2px;font-weight:400;color:#f0f0f0;transform:scaleX(0.9069);-webkit-text-stroke:0.25px #f0f0f0;">Alterar Dados</div>
<div class="tx" style="left:635.70px;top:107.70px;font-size:11.2px;line-height:11.2px;font-weight:400;color:#f0f0f0;transform:scaleX(0.8810);-webkit-text-stroke:0.25px #f0f0f0;">Check List</div>
<div class="tx" style="left:20.00px;top:125.90px;font-size:10.2px;line-height:10.2px;font-weight:400;color:#f0f0f0;transform:scaleX(0.9790);-webkit-text-stroke:0.25px #f0f0f0;">Check List - Indústria</div>
<div class="tx" style="left:158.20px;top:125.90px;font-size:10.2px;line-height:10.2px;font-weight:400;color:#f0f0f0;transform:scaleX(0.9360);-webkit-text-stroke:0.25px #f0f0f0;">Check List - Lojas</div>
<div class="tx" style="left:261.20px;top:125.90px;font-size:10.2px;line-height:10.2px;font-weight:400;color:#f0f0f0;transform:scaleX(0.9487);-webkit-text-stroke:0.25px #f0f0f0;">Salvamento Check List</div>
<div class="tx" style="left:449.50px;top:125.90px;font-size:10.2px;line-height:10.2px;font-weight:400;color:#f0f0f0;transform:scaleX(0.9670);-webkit-text-stroke:0.25px #f0f0f0;">Relatório Evidência</div>
<div class="tx" style="left:629.20px;top:125.90px;font-size:10.2px;line-height:10.2px;font-weight:400;color:#f0f0f0;transform:scaleX(0.9661);-webkit-text-stroke:0.25px #f0f0f0;">Banco Dados</div>
<div class="tx" style="left:317.18px;top:168.60px;font-size:23px;line-height:23px;font-weight:400;color:#0a0a0a;transform:scaleX(0.8232);">CHECK</div>
<div class="tx" style="left:390.92px;top:168.60px;font-size:23px;line-height:23px;font-weight:400;color:#0a0a0a;transform:scaleX(0.7796);">LIST</div>
<div class="tx" style="left:437.27px;top:168.60px;font-size:23px;line-height:23px;font-weight:400;color:#0a0a0a;transform:scaleX(0.9332);">8'S</div>
<div class="tx" style="left:473.15px;top:168.60px;font-size:23px;line-height:23px;font-weight:400;color:#0a0a0a;transform:scaleX(1.0500);">-</div>
<div class="tx" style="left:488.00px;top:168.60px;font-size:23px;line-height:23px;font-weight:400;color:#0a0a0a;transform:scaleX(0.9471);">ADMINISTRATIVO</div>
<div class="tx" style="left:678.70px;top:168.60px;font-size:23px;line-height:23px;font-weight:400;color:#0a0a0a;transform:scaleX(0.8988);">INDÚSTRIA</div>
<div class="tx" style="left:118.60px;top:226.20px;font-size:11px;line-height:11px;font-weight:700;color:#000000;transform:scaleX(1.0416);">Área Auditada:</div>
<div class="tx" style="left:124.90px;top:243.50px;font-size:11px;line-height:11px;font-weight:700;color:#000000;transform:scaleX(1.0507);">Auditor (es):</div>
<div class="tx" style="left:132.10px;top:260.60px;font-size:11px;line-height:11px;font-weight:700;color:#000000;transform:scaleX(1.0443);">Auditado:</div>
<div class="tx" style="left:246.20px;top:226.20px;font-size:11px;line-height:11px;font-weight:400;color:#000000;transform:scaleX(1.1257);">Contabilidade</div>
<div class="tx" style="left:300.80px;top:243.70px;font-size:11px;line-height:11px;font-weight:400;color:#000000;transform:scaleX(1.1287);">Valderei Antunes</div>
<div class="tx" style="left:386.00px;top:225.90px;font-size:11px;line-height:11px;font-weight:700;color:#000000;transform:scaleX(1.0207);">Responsável pela Área:</div>
<div class="tx" style="left:672.00px;top:226.20px;font-size:11px;line-height:11px;font-weight:400;color:#000000;transform:scaleX(1.0811);">xxxxxxxxxx</div>
<div class="tx" style="left:518.75px;top:243.50px;font-size:11px;line-height:11px;font-weight:700;color:#000000;transform:scaleX(1.0330);">Data Auditoria:</div>
<div class="tx" style="left:517.00px;top:260.60px;font-size:11px;line-height:11px;font-weight:700;color:#000000;transform:scaleX(1.0176);">Nota  Avaliação:</div>
<div class="tx" style="left:763.00px;top:260.80px;font-size:11px;line-height:11px;font-weight:400;color:#000000;transform:scaleX(0.9597);">100</div>
<div class="tx" style="left:226.00px;top:278.60px;font-size:11px;line-height:11px;font-weight:700;color:#000000;transform:scaleX(0.9922);">Descrição dos Itens</div>
<div class="tx" style="left:450.00px;top:278.40px;font-size:11px;line-height:11px;font-weight:400;color:#000000;transform:scaleX(1.1397);">Ótimo</div>
<div class="tx" style="left:501.70px;top:278.40px;font-size:11px;line-height:11px;font-weight:400;color:#000000;transform:scaleX(1.0421);">Bom</div>
<div class="tx" style="left:540.00px;top:278.40px;font-size:11px;line-height:11px;font-weight:400;color:#000000;transform:scaleX(1.0551);">Regular</div>
<div class="tx" style="left:592.70px;top:278.40px;font-size:11px;line-height:11px;font-weight:400;color:#000000;transform:scaleX(1.0860);">Ruim</div>
<div class="tx" style="left:641.70px;top:278.40px;font-size:11px;line-height:11px;font-weight:400;color:#000000;transform:scaleX(1.0451);">N.A.</div>
<div class="tx" style="left:691.90px;top:278.40px;font-size:11px;line-height:11px;font-weight:700;color:#000000;transform:scaleX(1.0029);">Nota</div>
<div class="tx" style="left:765.40px;top:278.40px;font-size:11px;line-height:11px;font-weight:700;color:#000000;transform:scaleX(1.0310);">Comentários</div>
<div class="tx" style="left:225.00px;top:299.50px;font-size:11px;line-height:11px;font-weight:700;color:#000000;transform:scaleX(1.0136);">Senso de Utilização</div>
<div class="tx" style="left:128.50px;top:316.30px;font-size:9px;line-height:9px;font-weight:400;color:#1a1a1a;transform:scaleX(1.2103);">Existem no local auditado, apenas materiais que pertencem a</div>
<div class="tx" style="left:265.00px;top:330.50px;font-size:9px;line-height:9px;font-weight:400;color:#1a1a1a;transform:scaleX(1.1515);">área?</div>
<div class="tx" style="left:154.00px;top:353.60px;font-size:9px;line-height:9px;font-weight:400;color:#1a1a1a;transform:scaleX(1.1926);">Não existem materiais de expediente em excesso ?</div>
<div class="tx" style="left:125.00px;top:376.40px;font-size:9px;line-height:9px;font-weight:400;color:#1a1a1a;transform:scaleX(1.2072);">Computadores, ar condicionado e lâmpadas estão ligados sem</div>
<div class="tx" style="left:244.00px;top:390.30px;font-size:9px;line-height:9px;font-weight:400;color:#1a1a1a;transform:scaleX(1.1992);">necessidade?</div>
<div class="tx" style="left:117.30px;top:409.30px;font-size:11px;line-height:11px;font-weight:700;color:#000000;transform:scaleX(1.0207);">Total do Senso:</div>
<div class="tx" style="left:321.70px;top:409.30px;font-size:11px;line-height:11px;font-weight:700;color:#000000;transform:scaleX(0.9333);">0</div>
<div class="tx" style="left:219.00px;top:429.40px;font-size:11px;line-height:11px;font-weight:700;color:#000000;transform:scaleX(0.9952);">Senso de Organização</div>
<div class="tx" style="left:150.70px;top:455.70px;font-size:9px;line-height:9px;font-weight:400;color:#1a1a1a;transform:scaleX(1.2160);">A área auditada está identificada conforme padrão ?</div>
<div class="tx" style="left:120.70px;top:478.70px;font-size:9px;line-height:9px;font-weight:400;color:#1a1a1a;transform:scaleX(1.2158);">Os armários, prateleiras e gavetas estão identificados, conforme</div>
<div class="tx" style="left:257.30px;top:492.50px;font-size:9px;line-height:9px;font-weight:400;color:#1a1a1a;transform:scaleX(1.2112);">padrão?</div>
<div class="tx" style="left:185.00px;top:515.70px;font-size:9px;line-height:9px;font-weight:400;color:#1a1a1a;transform:scaleX(1.1858);">Mesas e bancadas estão organizadas?</div>
<div class="tx" style="left:150.00px;top:538.30px;font-size:9px;line-height:9px;font-weight:400;color:#1a1a1a;transform:scaleX(1.2195);">Materiais de uso comum estão em locais definidos e</div>
<div class="tx" style="left:242.70px;top:552.40px;font-size:9px;line-height:9px;font-weight:400;color:#1a1a1a;transform:scaleX(1.2538);">identificados?</div>
<div class="tx" style="left:136.70px;top:568.30px;font-size:9px;line-height:9px;font-weight:400;color:#1a1a1a;transform:scaleX(1.1905);">Nos murais não há comunicados sobrepostos, rasgados ou</div>
<div class="tx" style="left:251.70px;top:582.40px;font-size:9px;line-height:9px;font-weight:400;color:#1a1a1a;transform:scaleX(1.2245);">obsoletos?</div>
<div class="tx" style="left:117.30px;top:601.00px;font-size:11px;line-height:11px;font-weight:700;color:#000000;transform:scaleX(1.0207);">Total do Senso:</div>
<div class="tx" style="left:321.70px;top:601.00px;font-size:11px;line-height:11px;font-weight:700;color:#000000;transform:scaleX(0.9333);">0</div>
</body></html>
